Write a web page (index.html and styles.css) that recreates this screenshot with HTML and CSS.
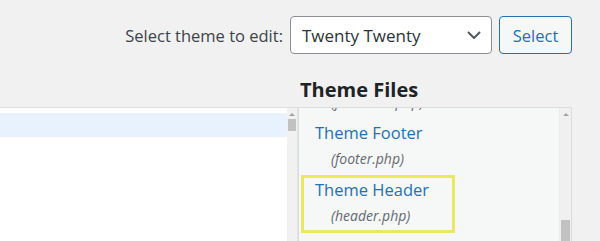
FILE: index.html
```html
<!DOCTYPE html>
<html>
<head>
<meta charset="utf-8">
<link rel="stylesheet" href="styles.css">
</head>
<body>
<div class="page">
  <div class="toolbar">
    <label class="label">Select theme to edit:</label>
    <div class="select">
      <span class="select-text">Twenty Twenty</span>
      <svg class="chev" width="14" height="8" viewBox="0 0 14 8"><polyline points="1,1 7,7 13,1" fill="none" stroke="#50575e" stroke-width="2"/></svg>
    </div>
    <button class="btn">Select</button>
  </div>
  <div class="main">
    <div class="editor">
      <div class="code">
        <div class="line-active"></div>
      </div>
      <div class="vscroll">
        <div class="arrow"></div>
        <div class="thumb-top"></div>
      </div>
    </div>
    <div class="sidebar">
      <h2 class="title">Theme Files</h2>
      <div class="panel">
        <ul class="files">
          <li class="file"><span class="fname">Theme Functions</span><span class="fpath">(functions.php)</span></li>
          <li class="file"><span class="fname">Theme Footer</span><span class="fpath">(footer.php)</span></li>
          <li class="file current"><span class="fname">Theme Header</span><span class="fpath">(header.php)</span></li>
        </ul>
        <div class="pscroll">
          <div class="arrow"></div>
          <div class="thumb-bottom"></div>
        </div>
      </div>
    </div>
  </div>
</div>
</body>
</html>
```
FILE: styles.css
```css
html, body {
  margin: 0;
  padding: 0;
  background: #f1f1f1;
  font-family: "Open Sans", "Noto Sans", sans-serif;
  color: #3c434a;
  overflow: hidden;
}
.page {
  width: 600px;
  height: 241px;
  overflow: hidden;
}
.toolbar {
  display: flex;
  justify-content: flex-end;
  align-items: center;
  padding: 16px 28px 0 0;
  height: 38px;
}
.label {
  font-size: 16.5px;
  color: #3c434a;
  margin-right: 7px;
}
.select {
  box-sizing: border-box;
  width: 202px;
  height: 38px;
  border: 1px solid #8c8f94;
  border-radius: 4px;
  background: #fff;
  display: flex;
  align-items: center;
  justify-content: space-between;
  padding: 0 10px 0 11px;
}
.select-text {
  font-size: 17px;
  color: #2c3338;
}
.chev {
  display: block;
}
.btn {
  box-sizing: border-box;
  margin-left: 7px;
  width: 73px;
  height: 38px;
  border: 1px solid #2271b1;
  border-radius: 4px;
  background: #f6f7f7;
  color: #2271b1;
  font-family: "Open Sans", "Noto Sans", sans-serif;
  font-size: 16.5px;
  padding: 0;
}
.main {
  display: flex;
  margin-top: 24px;
}
.editor {
  display: flex;
  width: 298px;
  height: 135px;
  margin-top: 29px;
  border-top: 1px solid #dddddd;
  box-sizing: border-box;
  background: #fff;
}
.code {
  flex: 1;
  padding-top: 5px;
}
.line-active {
  height: 24px;
  background: #e8f2fe;
}
.vscroll {
  width: 10px;
  background: #f1f1f1;
  border-right: 1px solid #e2e2e2;
  display: flex;
  flex-direction: column;
  align-items: center;
}
.arrow {
  width: 0;
  height: 0;
  margin-top: 5px;
  border-left: 3px solid transparent;
  border-right: 3px solid transparent;
  border-bottom: 3px solid #a3a3a3;
}
.thumb-top {
  margin-top: 3px;
  width: 8px;
  height: 12px;
  background: #c1c1c1;
}
.sidebar {
  width: 274px;
}
.title {
  margin: 0 0 0 2px;
  font-size: 20px;
  font-weight: 700;
  color: #1d2327;
  line-height: 24px;
  height: 29px;
}
.panel {
  box-sizing: border-box;
  height: 134px;
  border: 1px solid #dcdcde;
  border-bottom: none;
  background: #f6f7f7;
  display: flex;
  overflow: hidden;
}
.files {
  list-style: none;
  margin: -47px 0 0 2px;
  padding: 0;
  flex: 1;
}
.file {
  box-sizing: border-box;
  width: 154px;
  height: 57px;
  border: 3px solid transparent;
  padding: 0 11px;
  display: flex;
  flex-direction: column;
}
.file.current {
  border-color: #e9e95f;
  height: 58px;
}
.fname {
  font-size: 16.5px;
  line-height: 23px;
  color: #2271b1;
  white-space: nowrap;
}
.fpath {
  font-size: 14px;
  font-style: italic;
  line-height: 22px;
  margin-top: 4px;
  color: #646970;
  padding-left: 16px;
  white-space: nowrap;
}
.pscroll {
  width: 11px;
  background: #f0f0f0;
  display: flex;
  flex-direction: column;
  align-items: center;
  border-left: 1px solid #ececec;
}
.thumb-bottom {
  margin-top: auto;
  width: 9px;
  height: 21px;
  background: #c1c1c1;
}
```
